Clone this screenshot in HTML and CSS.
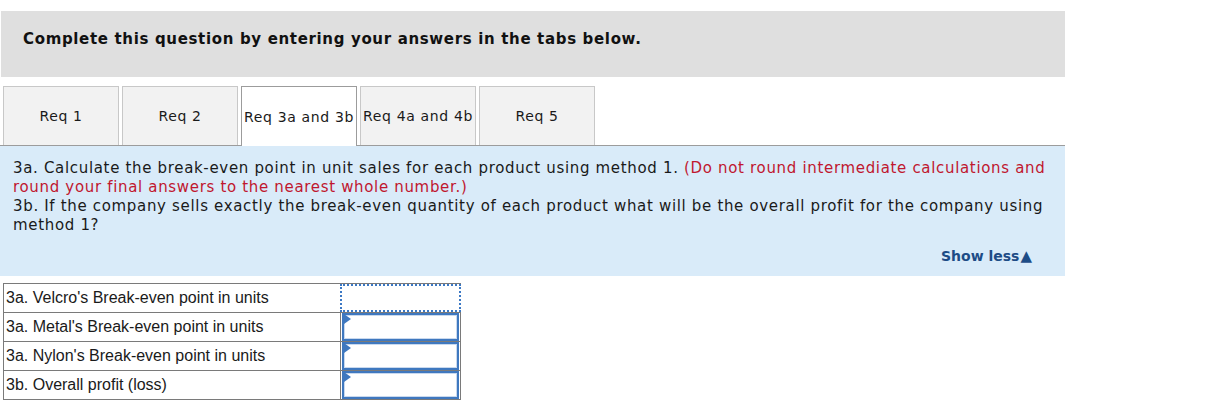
FILE: index.html
```html
<!DOCTYPE html>
<html>
<head>
<meta charset="utf-8">
<link rel="stylesheet" href="styles.css">
</head>
<body>
<div class="wrap">
  <div class="header">Complete this question by entering your answers in the tabs below.</div>
  <div class="tabs">
    <div class="tab">Req 1</div>
    <div class="tab">Req 2</div>
    <div class="tab active">Req 3a and 3b</div>
    <div class="tab">Req 4a and 4b</div>
    <div class="tab">Req 5</div>
  </div>
  <div class="panel">
    <p class="q">3a. Calculate the break-even point in unit sales for each product using method 1. <span class="red">(Do not round intermediate calculations and round your final answers to the nearest whole number.)</span><br>3b. If the company sells exactly the break-even quantity of each product what will be the overall profit for the company using method 1?</p>
    <div class="show">Show less<span class="tri">&#9650;</span></div>
  </div>
  <table class="ans">
    <tr><td class="lbl">3a. Velcro's Break-even point in units</td><td class="inp"><div class="box focus"></div></td></tr>
    <tr><td class="lbl">3a. Metal's Break-even point in units</td><td class="inp"><div class="box"><span class="flag"></span></div></td></tr>
    <tr><td class="lbl">3a. Nylon's Break-even point in units</td><td class="inp"><div class="box"><span class="flag"></span></div></td></tr>
    <tr><td class="lbl">3b. Overall profit (loss)</td><td class="inp"><div class="box"><span class="flag"></span></div></td></tr>
  </table>
</div>
</body>
</html>
```
FILE: styles.css
```css
body {
  margin: 0;
  background: #fff;
  font-family: "DejaVu Sans", Verdana, sans-serif;
  color: #1a1a1a;
}
.wrap {
  width: 1065px;
  padding-top: 11px;
}
.header {
  height: 66px;
  box-sizing: border-box;
  margin-left: 1px;
  background: #dfdfdf;
  padding: 19px 0 0 22px;
  font-weight: bold;
  font-size: 15px;
  letter-spacing: 0.66px;
  color: #111;
}
.tabs {
  display: flex;
  gap: 3px;
  margin-top: 9px;
  padding-left: 3px;
  border-bottom: 1px solid #9c9c9c;
  height: 59px;
}
.tab {
  width: 116px;
  height: 59px;
  box-sizing: border-box;
  border: 1px solid #c8c8c8;
  border-bottom: none;
  background: #f2f2f2;
  display: flex;
  align-items: center;
  justify-content: center;
  font-size: 14px;
  letter-spacing: 0.65px;
  color: #1a1a1a;
  white-space: nowrap;
}
.tab.active {
  background: #fff;
  border-color: #9c9c9c;
  height: 60px;
  position: relative;
  z-index: 1;
}
.panel {
  background: #d9ebf9;
  height: 130px;
  box-sizing: border-box;
  padding: 13px 13px 0 13px;
  display: flex;
  flex-direction: column;
}
.q {
  margin: 0;
  font-size: 15px;
  line-height: 19px;
  letter-spacing: 0.67px;
  color: #1a1a1a;
}
.red {
  color: #c0172f;
}
.show {
  margin-top: auto;
  margin-bottom: 11px;
  align-self: flex-end;
  margin-right: 20px;
  font-weight: bold;
  font-size: 14px;
  color: #1d4c86;
  white-space: nowrap;
}
.tri {
  font-size: 15px;
  margin-left: 1px;
}
.ans {
  margin: 7px 0 0 3px;
  border-collapse: collapse;
  font-family: "Liberation Sans", Arial, sans-serif;
  font-size: 16px;
  color: #1a1a1a;
}
.ans td {
  border: 1px solid #7a7a7a;
  height: 28px;
  padding: 0;
}
.lbl {
  width: 334px;
  padding-left: 2px !important;
}
.inp {
  width: 119px;
}
.box {
  position: relative;
  height: 28px;
  box-sizing: border-box;
  margin: 0 1px;
  border: 2px solid #3f78bf;
  box-shadow: inset 0 0 0 1px #c9d9ee;
  background: #fff;
}
.box.focus {
  border: 2px dotted #3b78c4;
  box-shadow: none;
  margin: 0 -1px;
}
.flag {
  position: absolute;
  left: 0;
  top: 0;
  width: 0;
  height: 0;
  border-top: 5px solid transparent;
  border-bottom: 5px solid transparent;
  border-left: 7px solid #3f78bf;
  margin-top: -1px;
}
```
